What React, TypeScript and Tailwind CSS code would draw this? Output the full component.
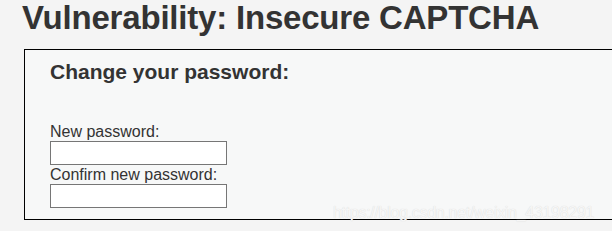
import React from "react";

export default function App() {
  return (
    <div
      className="relative w-full h-[231px] overflow-hidden bg-[#f4f4f4] text-[#333333]"
      style={{ fontFamily: '"Liberation Sans", Arial, sans-serif' }}
    >
      <h1 className="pl-[22px] mt-[1px] text-[33px] leading-[33px] font-bold tracking-[-0.2px]">
        Vulnerability: Insecure CAPTCHA
      </h1>
      <div className="ml-[24px] mt-[15px] w-[620px] border border-black bg-[#f7f8f8] pl-[25px] pt-[10px] pb-[11px]">
        <h3 className="text-[21px] leading-[24px] font-bold">Change your password:</h3>
        <div className="mt-[38px] text-[16px] leading-[19px]">New password:</div>
        <div className="w-[177px] h-[24px] border border-[#767676] bg-white" />
        <div className="text-[16px] leading-[19px]">Confirm new password:</div>
        <div className="w-[177px] h-[24px] border border-[#767676] bg-white" />
      </div>
      <div
        className="absolute left-[333px] top-[203px] text-[16px] leading-[20px] tracking-[-0.3px] text-[#f6f6f6] whitespace-nowrap"
        style={{ textShadow: "0 0 1px #d4d4d4" }}
      >
        https://blog.csdn.net/weixin_43198291
      </div>
    </div>
  );
}
